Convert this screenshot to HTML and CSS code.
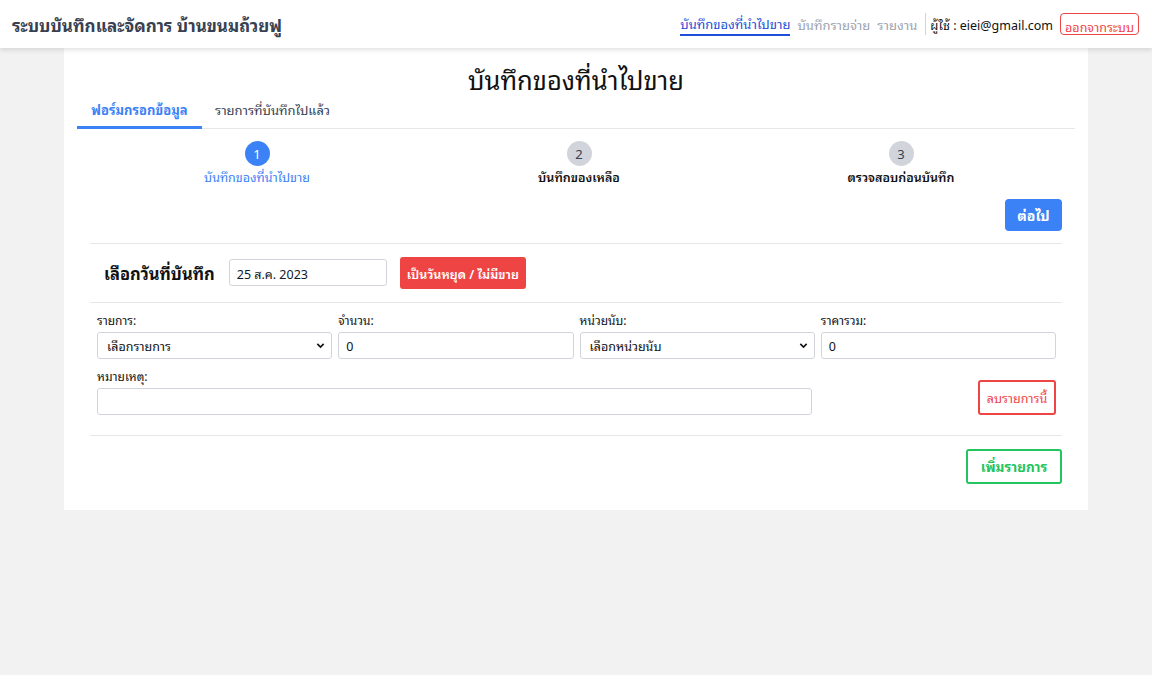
FILE: index.html
```html
<!DOCTYPE html>
<html lang="th">
<head>
<meta charset="utf-8">
<title>บันทึกของที่นำไปขาย</title>
<link rel="stylesheet" href="styles.css">
</head>
<body>
<header class="topbar">
  <div class="brand">ระบบบันทึกและจัดการ บ้านขนมถ้วยฟู</div>
  <nav class="nav">
    <a class="nav-link active">บันทึกของที่นำไปขาย</a>
    <a class="nav-link">บันทึกรายจ่าย</a>
    <a class="nav-link">รายงาน</a>
    <span class="sep"></span>
    <span class="user">ผู้ใช้ : eiei@gmail.com</span>
    <button class="logout">ออกจากระบบ</button>
  </nav>
</header>
<main class="card">
  <h1 class="title">บันทึกของที่นำไปขาย</h1>
  <div class="tabs">
    <div class="tab active">ฟอร์มกรอกข้อมูล</div>
    <div class="tab">รายการที่บันทึกไปแล้ว</div>
  </div>
  <div class="body">
    <div class="steps">
      <div class="step current"><span class="dot">1</span><span class="step-label">บันทึกของที่นำไปขาย</span></div>
      <div class="step"><span class="dot">2</span><span class="step-label">บันทึกของเหลือ</span></div>
      <div class="step"><span class="dot">3</span><span class="step-label">ตรวจสอบก่อนบันทึก</span></div>
    </div>
    <div class="next-row"><button class="btn-next">ต่อไป</button></div>
    <hr class="rule">
    <div class="date-row">
      <span class="date-label">เลือกวันที่บันทึก</span>
      <div class="date-input">25 ส.ค. 2023</div>
      <button class="btn-holiday">เป็นวันหยุด / ไม่มีขาย</button>
    </div>
    <hr class="rule">
    <div class="item">
      <div class="grid">
        <label class="field"><span class="lbl">รายการ:</span>
          <div class="select">เลือกรายการ<svg class="chev" viewBox="0 0 10 10" width="9" height="9"><path d="M1.5 3.2 L5 6.7 L8.5 3.2" fill="none" stroke="#111" stroke-width="1.8"/></svg></div>
        </label>
        <label class="field"><span class="lbl">จำนวน:</span><div class="input">0</div></label>
        <label class="field"><span class="lbl">หน่วยนับ:</span>
          <div class="select">เลือกหน่วยนับ<svg class="chev" viewBox="0 0 10 10" width="9" height="9"><path d="M1.5 3.2 L5 6.7 L8.5 3.2" fill="none" stroke="#111" stroke-width="1.8"/></svg></div>
        </label>
        <label class="field"><span class="lbl">ราคารวม:</span><div class="input">0</div></label>
      </div>
      <div class="row2">
        <label class="field note"><span class="lbl">หมายเหตุ:</span><div class="input"></div></label>
        <button class="btn-remove">ลบรายการนี้</button>
      </div>
    </div>
    <hr class="rule">
    <div class="add-row"><button class="btn-add">เพิ่มรายการ</button></div>
  </div>
</main>
</body>
</html>
```
FILE: styles.css
```css
* { box-sizing: border-box; }
html, body { margin: 0; padding: 0; }
body {
  background: #f2f2f2;
  font-family: "Noto Sans Thai Looped", "Noto Sans", "Noto Sans Thai", "DejaVu Sans", sans-serif;
  color: #111827;
  font-size: 12px;
}
button { font-family: inherit; cursor: pointer; }
.topbar {
  height: 48px;
  background: #fff;
  box-shadow: 0 2px 5px rgba(0,0,0,0.12);
  display: flex;
  align-items: center;
  justify-content: space-between;
  padding: 0 13px 0 12px;
  position: relative;
  z-index: 2;
}
.brand { font-size: 17px; font-weight: 700; color: #374151; }
.nav { display: flex; align-items: center; gap: 7px; }
.nav-link { font-size: 13px; color: #9ca3af; }
.nav-link.active { color: #1d4ed8; border-bottom: 2px solid #1d4ed8; padding-bottom: 0; }
.sep { width: 1px; height: 22px; background: #d1d5db; margin: 0 -3px 0 1px; }
.user { font-size: 12.5px; color: #111; }
.logout {
  font-size: 12.5px; color: #ef4444; background: #fff;
  border: 1.5px solid #ef4444; border-radius: 4px; padding: 2px 4px; height: 22px;
}
.card {
  width: 1024px;
  margin: 0 auto;
  background: #fff;
  padding: 14px 13px 26px;
}
.title { margin: 0; text-align: center; font-size: 25.5px; font-weight: 400; color: #111; line-height: 34px; }
.tabs { display: flex; border-bottom: 1px solid #e5e7eb; margin-top: -2px; }
.tab { font-size: 13px; color: #374151; padding: 5px 12px 6px; }
.tab.active { color: #3b82f6; font-weight: 700; border-bottom: 3px solid #3b82f6; margin-bottom: -1px; width: 125px; text-align: center; }
.tab:not(.active) { padding-left: 13px; }
.body { padding: 12px 13px 0; }
.steps { display: flex; padding-left: 6px; }
.step { width: 323px; display: flex; flex-direction: column; align-items: center; gap: 2px; }
.dot {
  width: 25px; height: 25px; border-radius: 50%; background: #d1d5db; color: #374151;
  display: flex; align-items: center; justify-content: center; font-size: 13px;
}
.step-label { font-size: 12.5px; font-weight: 600; color: #111; line-height: 16px; }
.step.current .dot { background: #3b82f6; color: #fff; }
.step.current .step-label { color: #3b82f6; font-weight: 400; }
.next-row { display: flex; justify-content: flex-end; margin-top: 15px; }
.btn-next {
  background: #3b82f6; color: #fff; border: 0; border-radius: 4px;
  width: 57px; height: 32px; font-size: 14px; font-weight: 700; line-height: 20px;
}
.rule { border: 0; border-top: 1.5px solid #e5e7eb; margin: 12px 0 0; }
.date-row { display: flex; align-items: center; padding: 12px 0 13px 14px; height: 58px; }
.date-label { font-size: 16.5px; font-weight: 700; color: #111; line-height: 24px; }
.date-input {
  margin-left: 14px; width: 158px; height: 27px; border: 1px solid #d1d5db; border-radius: 3px;
  display: flex; align-items: center; padding-left: 7px; font-size: 12.5px;
}
.btn-holiday {
  margin-left: 13px; height: 32px; padding: 0 7px; background: #ef4444; color: #fff;
  border: 0; border-radius: 3px; font-size: 12.5px; font-weight: 600; line-height: 18px;
}
.date-row + .rule { margin-top: 0; }
.item { padding: 8.5px 6px 20px 7px; }
.grid { display: grid; grid-template-columns: repeat(4, 1fr); gap: 6px; }
.field { display: flex; flex-direction: column; gap: 4px; }
.lbl { font-size: 12px; color: #111; line-height: 16px; }
.input, .select {
  height: 27px; border: 1px solid #d1d5db; border-radius: 3px; display: flex; align-items: center;
  padding: 0 7px; font-size: 12.5px; color: #111;
}
.select { justify-content: space-between; padding: 0 6px 0 9px; font-size: 12.5px; }
.row2 { display: flex; justify-content: space-between; align-items: flex-end; margin-top: 9px; }
.note { width: 715px; }
.btn-remove {
  height: 35px; width: 78px; background: #fff; color: #ef4444; border: 2px solid #ef4444;
  border-radius: 3px; font-size: 12.5px; margin-bottom: 0; line-height: 18px;
}
.item + .rule { margin-top: 0; }
.add-row { display: flex; justify-content: flex-end; margin-top: 13px; }
.btn-add {
  width: 96px; height: 35px; background: #fff; color: #22c55e; border: 2px solid #22c55e;
  border-radius: 3px; font-size: 13.5px; font-weight: 700; line-height: 20px;
}
```
